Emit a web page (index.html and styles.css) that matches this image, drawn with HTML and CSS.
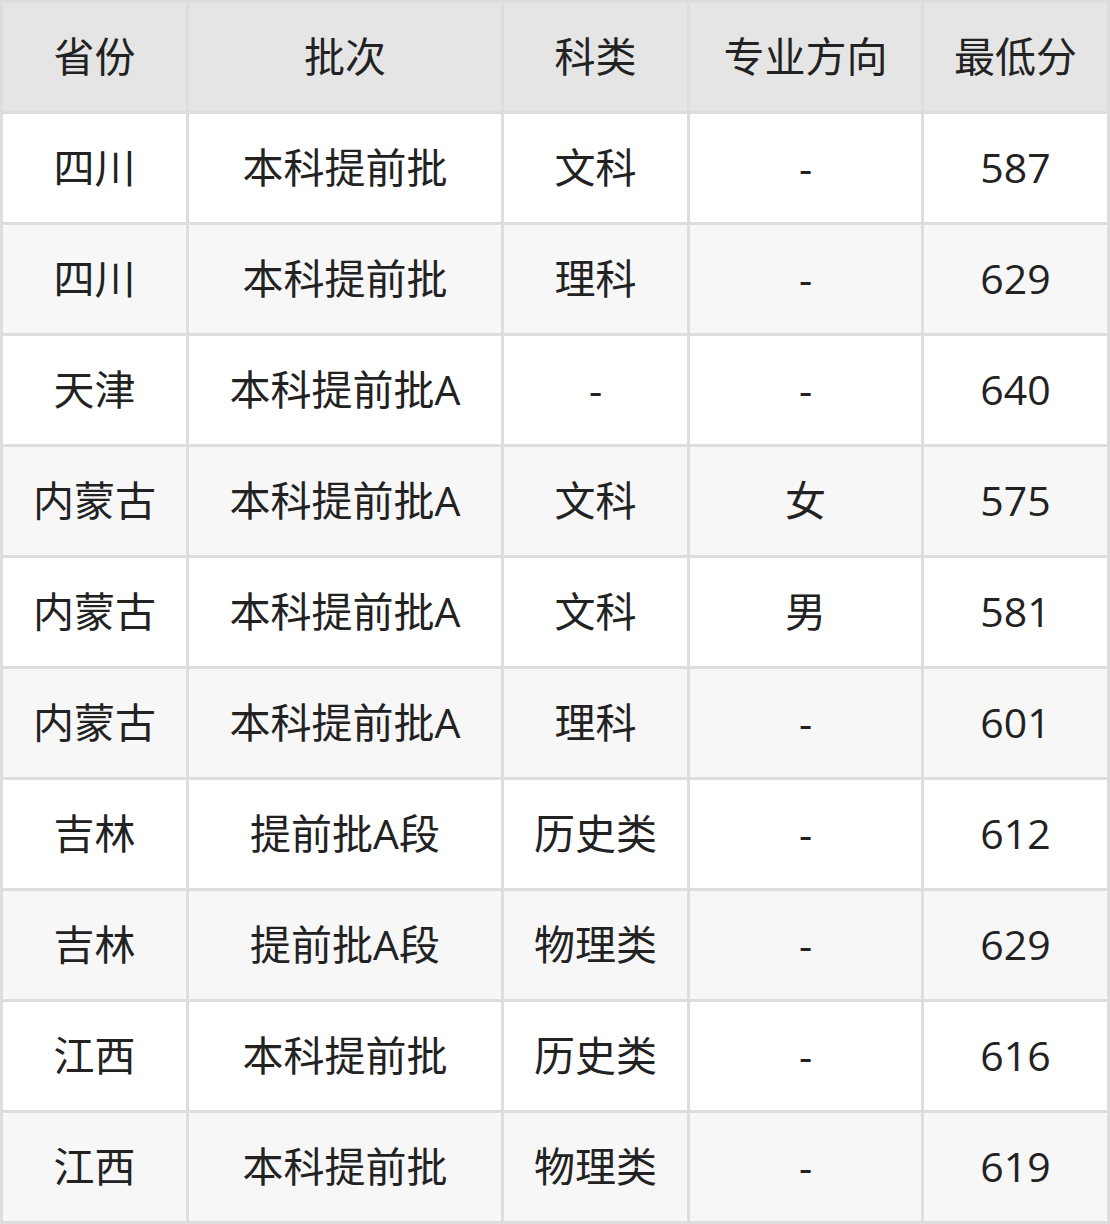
FILE: index.html
```html
<!DOCTYPE html>
<html lang="zh">
<head>
<meta charset="utf-8">
<link rel="stylesheet" href="styles.css">
</head>
<body>
<table class="score-table">
  <colgroup>
    <col class="c1"><col class="c2"><col class="c3"><col class="c4"><col class="c5">
  </colgroup>
  <thead>
    <tr><th>省份</th><th>批次</th><th>科类</th><th>专业方向</th><th>最低分</th></tr>
  </thead>
  <tbody>
    <tr><td>四川</td><td>本科提前批</td><td>文科</td><td>-</td><td>587</td></tr>
    <tr><td>四川</td><td>本科提前批</td><td>理科</td><td>-</td><td>629</td></tr>
    <tr><td>天津</td><td>本科提前批A</td><td>-</td><td>-</td><td>640</td></tr>
    <tr><td>内蒙古</td><td>本科提前批A</td><td>文科</td><td>女</td><td>575</td></tr>
    <tr><td>内蒙古</td><td>本科提前批A</td><td>文科</td><td>男</td><td>581</td></tr>
    <tr><td>内蒙古</td><td>本科提前批A</td><td>理科</td><td>-</td><td>601</td></tr>
    <tr><td>吉林</td><td>提前批A段</td><td>历史类</td><td>-</td><td>612</td></tr>
    <tr><td>吉林</td><td>提前批A段</td><td>物理类</td><td>-</td><td>629</td></tr>
    <tr><td>江西</td><td>本科提前批</td><td>历史类</td><td>-</td><td>616</td></tr>
    <tr><td>江西</td><td>本科提前批</td><td>物理类</td><td>-</td><td>619</td></tr>
  </tbody>
</table>
</body>
</html>
```
FILE: styles.css
```css
html, body {
  margin: 0;
  padding: 0;
  background: #ffffff;
}

.score-table {
  border-collapse: separate;
  border-spacing: 3px;
  background: #dddddd;
  table-layout: fixed;
  width: 1110px;
  font-family: "Open Sans", "Noto Sans CJK SC", sans-serif;
  font-size: 41px;
  line-height: 1.2;
  color: #222222;
}

.c1, .c3, .c5 { width: 183px; }
.c2 { width: 312px; }
.c4 { width: 231px; }

.score-table th,
.score-table td {
  height: 108px;
  padding: 0;
  text-align: center;
  vertical-align: middle;
  font-weight: normal;
  white-space: nowrap;
}

.score-table th {
  background: #e5e5e5;
}

.score-table tbody tr:nth-child(odd) td {
  background: #ffffff;
}

.score-table tbody tr:nth-child(even) td {
  background: #f7f7f7;
}
```
